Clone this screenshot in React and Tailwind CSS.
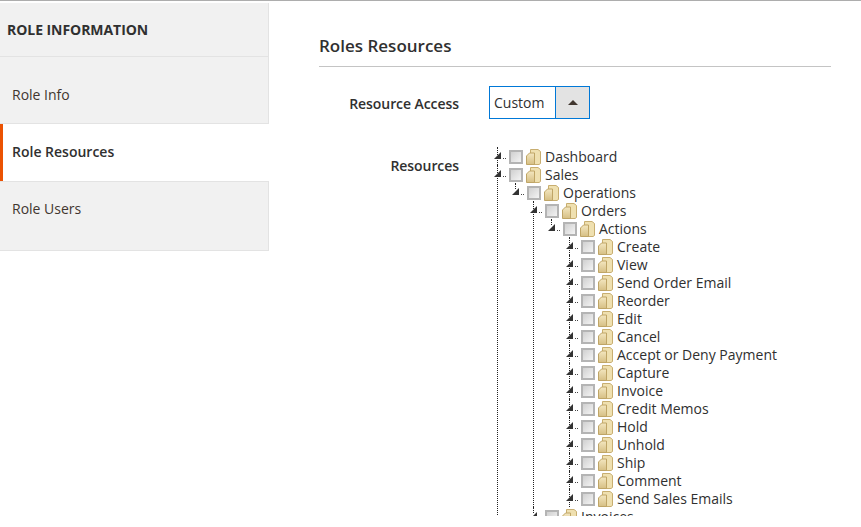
const tree = [
  { label: "Dashboard", line: true },
  {
    label: "Sales",
    line: true,
    children: [
      {
        label: "Operations",
        children: [
          {
            label: "Orders",
            line: true,
            children: [
              {
                label: "Actions",
                children: [
                  "Create",
                  "View",
                  "Send Order Email",
                  "Reorder",
                  "Edit",
                  "Cancel",
                  "Accept or Deny Payment",
                  "Capture",
                  "Invoice",
                  "Credit Memos",
                  "Hold",
                  "Unhold",
                  "Ship",
                  "Comment",
                  "Send Sales Emails",
                ].map((label) => ({ label, line: true })),
              },
            ],
          },
          { label: "Invoices" },
        ],
      },
    ],
  },
]

function Arrow() {
  return (
    <svg width="16" height="18" viewBox="0 0 16 18" className="relative shrink-0">
      <path d="M1 12 L8 12 L8 5 Z" fill="#333" />
      <path d="M10 11.5h1M12 11.5h1" stroke="#444" strokeWidth="1" />
    </svg>
  )
}

function Checkbox() {
  return <span className="w-[14px] h-[14px] mt-[3px] shrink-0 border-2 border-[#b4b4b4] bg-gradient-to-br from-[#d0d0d0] to-[#f4f4f4]" />
}

function Folder() {
  return (
    <svg width="15" height="16" viewBox="0 0 15 16" className="shrink-0 mt-[2px] ml-[3px]">
      <defs>
        <linearGradient id="folderFront" x1="0" y1="0" x2="0" y2="1">
          <stop offset="0" stopColor="#f3e7c0" />
          <stop offset="1" stopColor="#d6bf84" />
        </linearGradient>
      </defs>
      <path d="M4.5 .5 H12 L14.5 2.5 V14.5 L13 15.5 H4.5 Z" fill="#efe0b0" stroke="#c8ae70" />
      <path d="M.5 7 L3.5 4 H8.5 V15.5 H.5 Z" fill="url(#folderFront)" stroke="#bfa566" />
    </svg>
  )
}

function TreeNode({ node }) {
  return (
    <li className="relative">
      <span className={`absolute left-[4px] top-0 border-l border-dotted border-[#222] ${node.line ? "bottom-0" : "h-[6px]"}`} />
      <div className="relative flex items-start h-[18px]">
        <Arrow />
        <Checkbox />
        <Folder />
        <span className="ml-[4px] mt-[1px] text-[14px] leading-[18px] text-[#303030] whitespace-nowrap">{node.label}</span>
      </div>
      {node.children && (
        <ul className="relative pl-[18px]">
          {node.children.map((child) => (
            <TreeNode key={child.label} node={child} />
          ))}
        </ul>
      )}
    </li>
  )
}

export default function App() {
  return (
    <div className="h-[516px] overflow-hidden bg-white border-t border-[#adadad] font-['Open_Sans',sans-serif] text-[#303030] flex">
      <aside className="w-[269px] shrink-0 pt-[2px] text-[14px]">
        <div className="h-[54px] pl-[7px] flex items-center bg-[#f1f1f1] border-r border-b border-[#e3e3e3] font-bold tracking-[-0.05px]">
          ROLE INFORMATION
        </div>
        <div className="h-[67px] pl-[12px] pt-[8px] flex items-center bg-[#f1f1f1] border-r border-b border-[#e3e3e3] text-[#41362f]">
          Role Info
        </div>
        <div className="h-[57px] pl-[9px] pb-[2px] flex items-center bg-white border-l-[3px] border-[#eb5202] font-semibold">
          Role Resources
        </div>
        <div className="h-[70px] pl-[12px] pb-[15px] flex items-center bg-[#f1f1f1] border-r border-t border-b border-[#e3e3e3] text-[#41362f]">
          Role Users
        </div>
      </aside>

      <main className="ml-[50px] w-[512px]">
        <h2 className="h-[66px] pt-[33px] border-b border-[#c4c4c4] text-[17px] leading-[24px] font-semibold">
          Roles Resources
        </h2>
        <div className="mt-[19px] flex items-center">
          <span className="w-[141px] pt-[2px] pr-[1px] text-right text-[14px] font-semibold tracking-[-0.07px]">Resource Access</span>
          <div className="ml-[29px] w-[101px] h-[33px] flex border border-[#0078d7]">
            <span className="flex-1 pl-[4px] flex items-center text-[14px]">Custom</span>
            <span className="w-[34px] flex items-center justify-center bg-[#e3e3e3] border-l border-[#0078d7]">
              <span className="w-0 h-0 border-x-[5px] border-x-transparent border-b-[5px] border-b-[#41362f]" />
            </span>
          </div>
        </div>
        <div className="mt-[28px] flex">
          <span className="w-[141px] mt-[9px] pr-[1px] text-right text-[14px] leading-[20px] font-semibold tracking-[-0.07px]">Resources</span>
          <ul className="ml-[33px]">
            {tree.map((node) => (
              <TreeNode key={node.label} node={node} />
            ))}
          </ul>
        </div>
      </main>
    </div>
  )
}
